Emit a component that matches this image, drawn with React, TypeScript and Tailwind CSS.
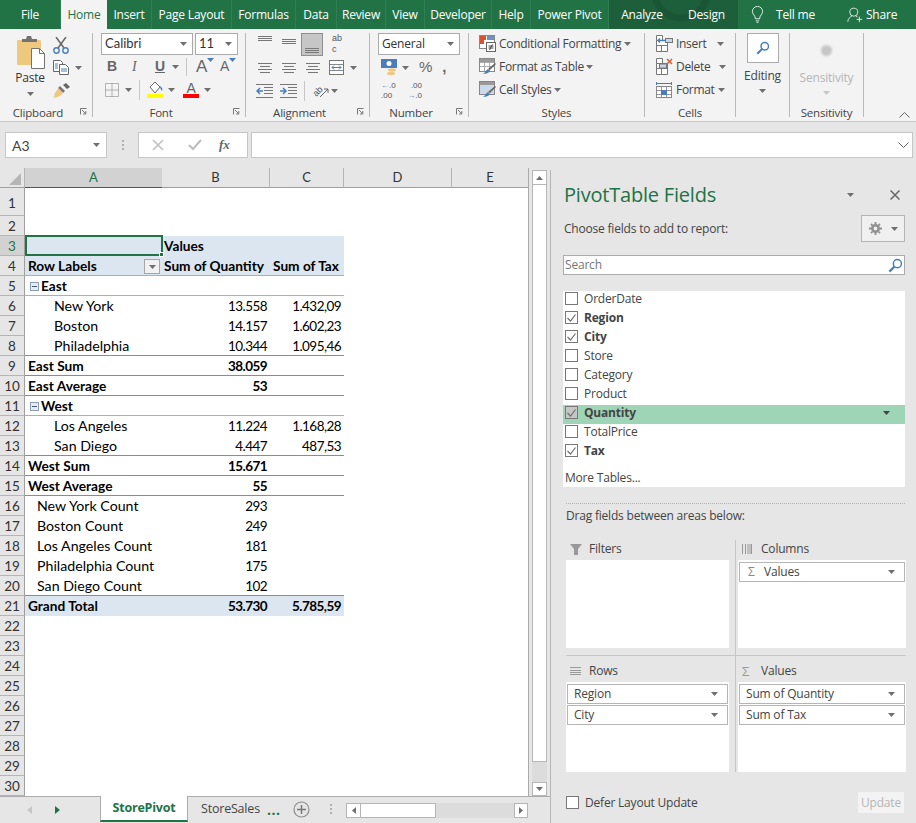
import type { ReactNode } from 'react'

const BLUE = '#4a7ebb'
const GREY = '#6f6f6f'

const ribbonTabs = [
  { label: 'File', width: 'w-[61px]' },
  { label: 'Home', width: 'w-[46px]', active: true },
  { label: 'Insert', width: 'w-[45px]' },
  { label: 'Page Layout', width: 'w-[80px]' },
  { label: 'Formulas', width: 'w-[64px]' },
  { label: 'Data', width: 'w-[41px]' },
  { label: 'Review', width: 'w-[49px]' },
  { label: 'View', width: 'w-[39px]' },
  { label: 'Developer', width: 'w-[67px]' },
  { label: 'Help', width: 'w-[39px]' },
  { label: 'Power Pivot', width: 'w-[78px]' },
]

type RowKind = 'blank' | 'head' | 'labels' | 'group' | 'city' | 'sum' | 'count' | 'total'

interface SheetRow {
  n: number
  kind: RowKind
  a?: string
  b?: string
  c?: string
  line?: 'light' | 'dark'
}

const sheetRows: SheetRow[] = [
  { n: 1, kind: 'blank' },
  { n: 2, kind: 'blank' },
  { n: 3, kind: 'head', b: 'Values' },
  { n: 4, kind: 'labels', a: 'Row Labels', b: 'Sum of Quantity', c: 'Sum of Tax', line: 'light' },
  { n: 5, kind: 'group', a: 'East', line: 'light' },
  { n: 6, kind: 'city', a: 'New York', b: '13.558', c: '1.432,09' },
  { n: 7, kind: 'city', a: 'Boston', b: '14.157', c: '1.602,23' },
  { n: 8, kind: 'city', a: 'Philadelphia', b: '10.344', c: '1.095,46', line: 'dark' },
  { n: 9, kind: 'sum', a: 'East Sum', b: '38.059', line: 'dark' },
  { n: 10, kind: 'sum', a: 'East Average', b: '53', line: 'dark' },
  { n: 11, kind: 'group', a: 'West', line: 'light' },
  { n: 12, kind: 'city', a: 'Los Angeles', b: '11.224', c: '1.168,28' },
  { n: 13, kind: 'city', a: 'San Diego', b: '4.447', c: '487,53', line: 'dark' },
  { n: 14, kind: 'sum', a: 'West Sum', b: '15.671', line: 'dark' },
  { n: 15, kind: 'sum', a: 'West Average', b: '55', line: 'dark' },
  { n: 16, kind: 'count', a: 'New York Count', b: '293' },
  { n: 17, kind: 'count', a: 'Boston Count', b: '249' },
  { n: 18, kind: 'count', a: 'Los Angeles Count', b: '181' },
  { n: 19, kind: 'count', a: 'Philadelphia Count', b: '175' },
  { n: 20, kind: 'count', a: 'San Diego Count', b: '102', line: 'dark' },
  { n: 21, kind: 'total', a: 'Grand Total', b: '53.730', c: '5.785,59' },
  ...[22, 23, 24, 25, 26, 27, 28, 29, 30].map((n): SheetRow => ({ n, kind: 'blank' })),
]

const fields = [
  { name: 'OrderDate' },
  { name: 'Region', checked: true },
  { name: 'City', checked: true },
  { name: 'Store' },
  { name: 'Category' },
  { name: 'Product' },
  { name: 'Quantity', checked: true, active: true },
  { name: 'TotalPrice' },
  { name: 'Tax', checked: true },
]

function Caret({ className = '', color = GREY }: { className?: string; color?: string }) {
  return (
    <svg width="7" height="4" viewBox="0 0 7 4" className={`shrink-0 ${className}`}>
      <path d="M0 0h7L3.5 4z" fill={color} />
    </svg>
  )
}

function Lines({ rows, className = '' }: { rows: [number, number][]; className?: string }) {
  return (
    <svg width="16" height="14" viewBox="0 0 16 14" className={`shrink-0 ${className}`}>
      {rows.map(([y, w], i) => (
        <rect key={i} x={(16 - w) / 2} y={y} width={w} height="1" fill="#777" />
      ))}
    </svg>
  )
}

function Launcher() {
  return (
    <svg width="7" height="7" viewBox="0 0 7 7" className="absolute right-[5px] top-[2px]">
      <path d="M.5 6.5v-6h6M2 2l3.500 3.500M5.800 3v3H3" fill="none" stroke="#777" />
    </svg>
  )
}

function Group({
  label,
  width,
  launcher,
  children,
}: {
  label: string
  width: string
  launcher?: boolean
  children: ReactNode
}) {
  return (
    <div className={`flex h-[84px] shrink-0 flex-col border-r border-[#b9b9b9] ${width}`}>
      <div className="h-[70px] shrink-0">{children}</div>
      <div className={`relative mt-[3px] text-center text-[11.5px] leading-[14px] text-[#444] ${launcher ? 'pr-[16px]' : ''}`}>
        {label}
        {launcher ? <Launcher /> : null}
      </div>
    </div>
  )
}

function StyleIcon({ kind }: { kind: 'cond' | 'table' | 'cell' }) {
  return (
    <svg width="17" height="17" viewBox="0 0 17 17" className="shrink-0">
      {kind === 'cond' ? (
        <>
          <rect x=".5" y=".5" width="15" height="13" fill="#fff" stroke="#888" />
          <rect x="1" y="1" width="6" height="4" fill="#d9532c" />
          <rect x="1" y="5" width="4" height="4" fill="#d9532c" />
          <rect x="8" y="1" width="7" height="4" fill="#6d93c4" />
          <rect x="7.5" y="7.5" width="9" height="9" fill="#fff" stroke="#666" />
          <path d="M9.500 11h5M9.500 13h5M13.500 9.500l-3 5.500" stroke="#444" fill="none" />
        </>
      ) : (
        <>
          <rect x=".5" y=".5" width="15" height="13" fill={kind === 'cell' ? '#ccd9e8' : '#fff'} stroke="#888" />
          {kind === 'table' ? (
            <path d="M1 4.500h14M1 8.500h14M5.500 1v12M10.500 1v12" stroke="#aaa" fill="none" />
          ) : null}
          <path d="M1 1h14v3H1z" fill="#9a9a9a" />
          <path d="M16 5l1 1-6 6-2-1z" fill="#666" />
          <path d="M9 11l2 2c-1 2-4 3-7 3 2-1 3-4 5-5z" fill={BLUE} />
        </>
      )}
    </svg>
  )
}

function CellIcon({ kind }: { kind: 'insert' | 'delete' | 'format' }) {
  return (
    <svg width="17" height="17" viewBox="0 0 17 17" className="shrink-0">
      {kind === 'format' ? (
        <>
          <path d="M.5 1v3M15.500 1v3M1 2.500h14" stroke={BLUE} fill="none" />
          <rect x=".5" y="5.500" width="15" height="11" fill="#fff" stroke="#888" />
          <path d="M5.500 6v10M10.500 6v10M1 9.500h14M1 13.500h14" stroke="#999" fill="none" />
          <rect x="5" y="9" width="6" height="5" fill={BLUE} />
        </>
      ) : (
        <>
          <path d="M.5.500h6v5h-6zM.5 5.500h11v5H.5zM.5 10.500h11v6H.5zM5.500 10.500v6" fill="#fff" stroke="#777" />
          {kind === 'insert' ? (
            <>
              <rect x="9.500" y="3.500" width="7" height="4" fill="#c7d7ea" stroke="#777" />
              <path d="M9 5.500H2M4 3.500l-2 2 2 2" stroke={BLUE} strokeWidth="1.400" fill="none" />
            </>
          ) : (
            <>
              <rect x="3.500" y="6" width="7" height="4" fill="#c7d7ea" stroke="#777" />
              <path d="M11 1l5 5M16 1l-5 5" stroke="#d9603c" strokeWidth="1.600" />
            </>
          )}
        </>
      )}
    </svg>
  )
}

function Magnifier({ size = 16, color = BLUE }: { size?: number; color?: string }) {
  return (
    <svg width={size} height={size} viewBox="0 0 16 16" className="shrink-0">
      <circle cx="10" cy="6" r="4.300" fill="none" stroke={color} strokeWidth="1.600" />
      <path d="M7 9l-5.500 5.500" stroke={color} strokeWidth="2.400" />
    </svg>
  )
}

function RibbonButton({ icon, label, caretGap }: { icon: ReactNode; label: string; caretGap: string }) {
  return (
    <div className="flex h-[23px] items-center">
      {icon}
      <span className="ml-[3px] whitespace-nowrap text-[12px] tracking-[-0.3px] text-[#444]">{label}</span>
      <Caret className={caretGap} />
    </div>
  )
}

function Ribbon() {
  return (
    <div className="flex h-[93px] shrink-0 border-b border-[#c8c8c8] bg-[#f3f3f3] pt-[4px]">
      <Group label="Clipboard" width="w-[93px]" launcher>
        <div className="flex">
          <div className="ml-[7px] flex w-[46px] flex-col items-center">
            <svg width="30" height="33" viewBox="0 0 30 33" className="mr-[-1px] mt-[3px]">
              <rect x="1" y="4" width="24" height="25" rx="1" fill="#edc87e" />
              <path d="M6 6V3h4l1-3h4l1 3h5v3z" fill="#737373" />
              <path d="M15.500 12.500h8l5 5v15h-13z" fill="#fff" stroke="#737373" />
              <path d="M23.500 12.500v5h5" fill="none" stroke="#737373" />
            </svg>
            <span className="mt-[1px] text-[12px] leading-[16px] text-[#333]">Paste</span>
            <Caret className="mt-[6px]" />
          </div>
          <div className="flex flex-col">
            <div className="flex h-[23px] items-center pt-[2px]">
              <svg width="16" height="17" viewBox="0 0 16 17">
                <path d="M3 0l8 11M13 0L5 11" stroke="#666" strokeWidth="1.500" />
                <circle cx="3.500" cy="13.500" r="2.700" fill="none" stroke={BLUE} strokeWidth="1.400" />
                <circle cx="12.500" cy="13.500" r="2.700" fill="none" stroke={BLUE} strokeWidth="1.400" />
              </svg>
            </div>
            <div className="flex h-[23px] items-center">
              <svg width="16" height="15" viewBox="0 0 16 15">
                <path d="M.5.500h7l2 2v9h-9z" fill="#fff" stroke="#666" />
                <path d="M6.500 4.500h6l3 3v7h-9z" fill="#fff" stroke="#666" />
                <path d="M8 9h6M8 11h6M2 4h3M2 6h3M2 8h3" stroke={BLUE} />
              </svg>
              <Caret className="ml-[6px]" />
            </div>
            <div className="flex h-[23px] items-center">
              <svg width="17" height="15" viewBox="0 0 17 15">
                <path d="M10 2l3-2 4 4-3 2z" fill="#666" />
                <path d="M7 3l5 5-2 2-5-5z" fill="#777" />
                <path d="M5 5l5 5c-2 3-5 4-10 5 2-2 1-3 2-5 1-1 2-3 3-5z" fill="#edc87e" />
              </svg>
            </div>
          </div>
        </div>
      </Group>

      <Group label="Font" width="w-[153px]" launcher>
        <div className="flex pl-[8px]">
          <div className="flex h-[22px] w-[92px] items-center justify-between border border-[#ababab] bg-white pl-[3px] pr-[5px] font-['Lato',sans-serif] text-[13px] tracking-normal text-[#333]">
            Calibri
            <Caret />
          </div>
          <div className="ml-[2px] flex h-[22px] w-[43px] items-center justify-between border border-[#ababab] bg-white pl-[3px] pr-[5px] font-['Lato',sans-serif] text-[13px] tracking-normal text-[#333]">
            11
            <Caret />
          </div>
        </div>
        <div className="flex h-[23px] items-center pl-[14px] font-['Liberation_Sans',sans-serif] text-[#666]">
          <span className="w-[24px] text-[14px] font-bold">B</span>
          <span className="w-[24px] pl-[1px] font-['Liberation_Serif',serif] text-[14px] italic">I</span>
          <span className="w-[13px] text-[14px] font-bold underline">U</span>
          <Caret className="ml-[4px]" />
          <span className="ml-[7px] h-[18px] w-px bg-[#c6c6c6]" />
          <span className="ml-[9px] flex w-[24px] items-start text-[17px] leading-[17px]">
            A
            <Caret color={BLUE} />
          </span>
          <span className="flex w-[20px] items-start text-[14px] leading-[17px]">
            A
            <Caret color={BLUE} />
          </span>
        </div>
        <div className="flex h-[23px] items-center pl-[12px]">
          <svg width="14" height="14" viewBox="0 0 14 14">
            <path d="M.5.500h13v13H.5zM7 .500v13M.5 7h13" fill="none" stroke="#777" strokeDasharray="1 1" />
          </svg>
          <Caret className="ml-[6px]" />
          <span className="ml-[7px] h-[20px] w-px bg-[#c6c6c6]" />
          <svg width="17" height="17" viewBox="0 0 17 17" className="ml-[7px]">
            <path d="M3 6l5-5 5 5-5 6z" fill="#fff" stroke="#666" />
            <path d="M13 5c2 1 3 3 2 5-1-1-2-3-2-5z" fill={BLUE} />
            <rect x="0" y="13" width="16" height="4" fill="#ffff00" />
          </svg>
          <Caret className="ml-[4px]" />
          <div className="ml-[8px] flex w-[16px] flex-col items-center">
            <span className="h-[13px] font-['Liberation_Sans',sans-serif] text-[14px] leading-[14px] text-[#666]">A</span>
            <span className="h-[4px] w-[16px] bg-[#ff0000]" />
          </div>
          <Caret className="ml-[5px]" />
        </div>
      </Group>

      <Group label="Alignment" width="w-[124px]" launcher>
        <div className="flex h-[23px] items-start pl-[11px]">
          <Lines rows={[[2, 14], [4, 14], [6, 14]]} className="mt-[1px]" />
          <Lines rows={[[5, 14], [7, 14], [9, 14]]} className="ml-[8px] mt-[1px]" />
          <div className="ml-[4px] flex h-[23px] w-[22px] items-end justify-center border border-[#8f8f8f] bg-[#c6c6c6]">
            <Lines rows={[[7, 14], [9, 14], [11, 14]]} />
          </div>
          <span className="ml-[9px] font-['Liberation_Sans',sans-serif] text-[9px] leading-[11px] tracking-normal text-[#555]">
            ab
            <br />c
          </span>
        </div>
        <div className="flex h-[23px] items-center pl-[11px]">
          <Lines rows={[[2, 14], [5, 10], [8, 14], [11, 10]]} />
          <Lines rows={[[2, 14], [5, 10], [8, 14], [11, 10]]} className="ml-[8px]" />
          <Lines rows={[[2, 14], [5, 10], [8, 14], [11, 10]]} className="ml-[8px]" />
          <svg width="15" height="15" viewBox="0 0 15 15" className="ml-[8px]">
            <rect x=".5" y=".5" width="14" height="14" fill="#fff" stroke="#777" />
            <path d="M1 4.500h13M1 10.500h13" stroke="#888" fill="none" />
            <path d="M3 7.500h9M5 5.500l-2 2 2 2M10 5.500l2 2-2 2" stroke={BLUE} fill="none" />
          </svg>
          <Caret className="ml-[6px]" />
        </div>
        <div className="flex h-[23px] items-center pl-[10px]">
          <svg width="17" height="14" viewBox="0 0 17 14">
            <path d="M8 3.500h9M8 6.500h9M8 9.500h9M0 13.500h17M0 .5h17" stroke="#777" />
            <path d="M1 7h6M4 4L1 7l3 3" stroke={BLUE} strokeWidth="1.500" fill="none" />
          </svg>
          <svg width="17" height="14" viewBox="0 0 17 14" className="ml-[7px]">
            <path d="M8 3.500h9M8 6.500h9M8 9.500h9M0 13.500h17M0 .5h17" stroke="#777" />
            <path d="M0 7h6M3 4l3 3-3 3" stroke={BLUE} strokeWidth="1.500" fill="none" />
          </svg>
          <span className="ml-[7px] h-[20px] w-px bg-[#c6c6c6]" />
          <svg width="17" height="17" viewBox="0 0 17 17" className="ml-[7px]">
            <text x="1" y="13" fontSize="9" fill="#555" fontFamily="Liberation Sans" transform="rotate(-45 5 10)">
              ab
            </text>
            <path d="M8 15l8-8M16 11V7h-4" stroke="#666" fill="none" />
          </svg>
          <Caret className="ml-[2px]" />
        </div>
      </Group>

      <Group label="Number" width="w-[99px]" launcher>
        <div className="ml-[8px] flex h-[22px] w-[82px] items-center justify-between border border-[#ababab] bg-white pl-[3px] pr-[5px] text-[12px] text-[#333]">
          General
          <Caret />
        </div>
        <div className="mt-[1px] flex h-[23px] items-center pl-[11px]">
          <svg width="16" height="17" viewBox="0 0 16 17">
            <rect x="0" y="0" width="16" height="9" fill={BLUE} />
            <circle cx="8" cy="4.500" r="2.500" fill="#fff" />
            <ellipse cx="11" cy="11" rx="4" ry="1.700" fill="#edc87e" />
            <ellipse cx="10" cy="14.500" rx="4" ry="1.700" fill="#edc87e" />
          </svg>
          <Caret className="ml-[5px]" />
          <span className="ml-[10px] font-['Liberation_Sans',sans-serif] text-[15px] text-[#666]">%</span>
          <span className="ml-[10px] font-['Liberation_Sans',sans-serif] text-[15px] font-bold text-[#666]">,</span>
        </div>
        <div className="flex h-[23px] items-center gap-[9px] pl-[11px] font-['Liberation_Sans',sans-serif] text-[8px] leading-[10px] tracking-normal text-[#555]">
          <span className="w-[16px]">
            <span className="text-[#4a7ebb]">←</span>.0
            <br />
            .00
          </span>
          <span className="w-[16px] text-right">
            .00
            <br />
            <span className="text-[#4a7ebb]">→</span>.0
          </span>
        </div>
      </Group>

      <Group label="Styles" width="w-[176px]">
        <div className="mt-[-1px] pl-[10px]">
          <RibbonButton icon={<StyleIcon kind="cond" />} label="Conditional Formatting" caretGap="ml-[3px]" />
          <RibbonButton icon={<StyleIcon kind="table" />} label="Format as Table" caretGap="ml-[2px]" />
          <RibbonButton icon={<StyleIcon kind="cell" />} label="Cell Styles" caretGap="ml-[2px]" />
        </div>
      </Group>

      <Group label="Cells" width="w-[91px]">
        <div className="mt-[-1px] pl-[11px]">
          <RibbonButton icon={<CellIcon kind="insert" />} label="Insert" caretGap="ml-[10px]" />
          <RibbonButton icon={<CellIcon kind="delete" />} label="Delete" caretGap="ml-[9px]" />
          <RibbonButton icon={<CellIcon kind="format" />} label="Format" caretGap="ml-[3px]" />
        </div>
      </Group>

      <Group label="" width="w-[54px]">
        <div className="flex flex-col items-center">
          <div className="flex h-[30px] w-[32px] items-center justify-center border border-[#ababab] bg-white">
            <Magnifier size={14} />
          </div>
          <span className="mt-[5px] text-[12px] leading-[16px] text-[#444]">Editing</span>
          <Caret className="mt-[5px]" />
        </div>
      </Group>

      <Group label="Sensitivity" width="w-[74px]">
        <div className="flex flex-col items-center">
          <span className="mt-[12px] h-[11px] w-[11px] rounded-full bg-[#c6c6c6] blur-[1px]" />
          <span className="mt-[14px] text-[12px] leading-[16px] text-[#b5b5b5]">Sensitivity</span>
          <Caret className="mt-[5px]" color="#c6c6c6" />
        </div>
      </Group>

      <div className="flex flex-1 items-end justify-end pb-[3px] pr-[6px]">
        <svg width="11" height="6" viewBox="0 0 11 6">
          <path d="M.5 5.500l5-5 5 5" fill="none" stroke="#666" />
        </svg>
      </div>
    </div>
  )
}

function TabBar() {
  return (
    <div className="flex h-[29px] shrink-0 bg-[#217346] text-[12px] text-white">
      {ribbonTabs.map((tab) => (
        <div
          key={tab.label}
          className={`flex items-center justify-center ${tab.width} ${
            tab.active ? 'bg-[#f3f3f3] text-[#217346]' : 'border-r border-[#2f7f52]'
          }`}
        >
          {tab.label}
        </div>
      ))}
      <div className="relative flex w-[129px] overflow-hidden bg-[#1d5f3b]">
        {/* faint ring pattern behind the contextual tabs */}
        <svg width="129" height="29" viewBox="0 0 129 29" className="absolute left-0 top-0">
          <circle cx="72" cy="-8" r="26" fill="none" stroke="#1a5635" strokeWidth="7" />
        </svg>
        <div className="relative flex w-[66px] items-center justify-center">Analyze</div>
        <div className="relative flex w-[63px] items-center justify-center">Design</div>
      </div>
      <div className="flex flex-1 items-center pl-[13px]">
        <svg width="13" height="17" viewBox="0 0 14 20" fill="none" stroke="#fff">
          <path d="M4.500 15c0-4-3.500-5-3.500-8.500a6 6 0 0112 0C13 10 9.500 11 9.500 15zM5 17.500h4M6 19.500h2" />
        </svg>
        <span className="ml-[12px]">Tell me</span>
        <svg width="16" height="16" viewBox="0 0 20 19" fill="none" stroke="#fff" className="ml-[32px]">
          <circle cx="8.500" cy="6" r="5" />
          <path d="M1 18c0-4 3-6 5-7M11 11l2 1M12 15h7M15.500 11.500v7" />
        </svg>
        <span className="ml-[3px]">Share</span>
      </div>
    </div>
  )
}

function FormulaBar() {
  return (
    <div className="flex h-[46px] shrink-0 items-start pl-[5px] pr-[3px] pt-[10px]">
      <div className="flex h-[26px] w-[102px] items-center justify-between border border-[#c6c6c6] bg-white pl-[6px] pr-[6px] font-['Lato',sans-serif] text-[14px] tracking-normal text-[#444]">
        A3
        <Caret />
      </div>
      <div className="flex h-[26px] w-[31px] flex-col items-center justify-center gap-[2px]">
        <span className="h-[2px] w-[2px] bg-[#b0b0b0]" />
        <span className="h-[2px] w-[2px] bg-[#b0b0b0]" />
        <span className="h-[2px] w-[2px] bg-[#b0b0b0]" />
      </div>
      <div className="flex h-[26px] w-[110px] items-center border border-[#c6c6c6] bg-white">
        <svg width="12" height="12" viewBox="0 0 12 12" className="ml-[13px]">
          <path d="M1 1l10 10M11 1L1 11" stroke="#bdbdbd" strokeWidth="1.500" />
        </svg>
        <svg width="14" height="12" viewBox="0 0 14 12" className="ml-[24px]">
          <path d="M1 6l4 4 8-9" stroke="#bdbdbd" strokeWidth="2" fill="none" />
        </svg>
        <span className="ml-[17px] font-['Liberation_Serif',serif] text-[13px] font-bold italic text-[#666]">fx</span>
      </div>
      <div className="ml-[3px] flex h-[26px] flex-1 items-center justify-end border border-[#c6c6c6] bg-white pr-[3px]">
        <svg width="11" height="6" viewBox="0 0 11 6">
          <path d="M.5.500l5 5 5-5" fill="none" stroke="#666" />
        </svg>
      </div>
    </div>
  )
}

function MinusBox() {
  return (
    <svg width="9" height="9" viewBox="0 0 9 9" className="mr-[2px] mt-[5px] shrink-0">
      <rect x=".5" y=".5" width="8" height="8" fill="#e6ecf4" stroke="#8d9db5" />
      <path d="M2 4.500h5" stroke="#4a5c7a" />
    </svg>
  )
}

function RowCells({ row }: { row: SheetRow }) {
  if (row.kind === 'blank') {
    return <div className="col-span-5 bg-white" />
  }

  const fill = row.kind === 'head' || row.kind === 'labels' || row.kind === 'total' ? 'bg-[#dce6f1]' : 'bg-white'
  const isBold = row.kind !== 'city' && row.kind !== 'count'
  const line =
    row.line === 'light' ? 'border-b border-[#95b3d7]' : row.line === 'dark' ? 'border-b border-[#6f92bc]' : ''
  const headerCells = row.kind === 'head' || row.kind === 'labels'
  const numbers = headerCells ? '' : 'justify-end text-[13.5px] tracking-[-0.55px]'

  return (
    <>
      <div
        className={`col-span-3 grid grid-cols-[137px_108px_74px] pt-[1px] leading-[18px] text-black ${fill} ${line} ${
          isBold ? 'text-[13.7px] font-bold' : 'text-[14.2px]'
        }`}
      >
        <div
          className={`relative flex items-start whitespace-nowrap ${
            row.kind === 'city' ? 'pl-[29px]' : row.kind === 'count' ? 'pl-[12px]' : row.kind === 'group' ? 'pl-[5px]' : 'pl-[3px]'
          }`}
        >
          {row.kind === 'group' ? <MinusBox /> : null}
          {row.a}
          {row.kind === 'labels' ? (
            <span className="absolute right-[2px] top-[2px] flex h-[15px] w-[16px] items-center justify-center border border-[#a6a6a6] bg-[#f1f1f1]">
              <Caret />
            </span>
          ) : null}
          {row.n === 3 ? (
            <span className="absolute left-0 top-[-2px] h-[21px] w-[138px] border-2 border-[#217346]">
              <span className="absolute bottom-[-3px] right-[-3px] h-[5px] w-[5px] border border-white bg-[#217346]" />
            </span>
          ) : null}
        </div>
        <div className={`flex items-start whitespace-nowrap pr-[3px] ${headerCells ? 'pl-[2px]' : ''} ${numbers}`}>{row.b}</div>
        <div className={`flex items-start whitespace-nowrap pr-[3px] ${headerCells ? 'pl-[3px]' : ''} ${numbers}`}>{row.c}</div>
      </div>
      <div className="col-span-2 bg-white" />
    </>
  )
}

function Sheet() {
  return (
    <div className="flex h-[628px] shrink-0">
      <div className="w-[529px] shrink-0 border-r border-[#ababab]">
        <div className="grid h-[20px] grid-cols-[25px_137px_108px_74px_108px_76px] border-b border-[#9f9f9f] text-center text-[13px] leading-[19px] text-[#333]">
          <div className="flex items-end justify-end border-r border-[#b5b5b5] pb-[3px] pr-[3px]">
            <svg width="12" height="12" viewBox="0 0 12 12">
              <path d="M12 0v12H0z" fill="#b5b5b5" />
            </svg>
          </div>
          <div className="mb-[-1px] border-b-2 border-[#217346] bg-[#d2d2d2] text-[#217346]">A</div>
          <div className="border-r border-[#b5b5b5]">B</div>
          <div className="border-r border-[#b5b5b5]">C</div>
          <div className="border-r border-[#b5b5b5]">D</div>
          <div>E</div>
        </div>
        {sheetRows.map((row) => (
          <div
            key={row.n}
            className={`grid grid-cols-[25px_137px_108px_74px_108px_76px] ${row.n === 1 ? 'h-[28px]' : 'h-[20px]'}`}
          >
            <div
              className={`border-b border-r border-b-[#b5b5b5] border-r-[#9f9f9f] text-center text-[13.5px] leading-[18px] ${
                row.n === 1 ? 'pt-[6px]' : 'pt-[1px]'
              } ${row.n === 3 ? 'bg-[#d2d2d2] text-[#217346]' : 'text-[#333]'}`}
            >
              {row.n}
            </div>
            <RowCells row={row} />
          </div>
        ))}
      </div>
      <div className="ml-[3px] mt-[2px] flex w-[15px] flex-col bg-[#dcdcdc]">
        <div className="flex h-[15px] shrink-0 items-center justify-center border border-[#b5b5b5] bg-white">
          <svg width="7" height="4" viewBox="0 0 7 4">
            <path d="M0 4h7L3.500 0z" fill={GREY} />
          </svg>
        </div>
        <div className="h-[577px] shrink-0 border-x border-b border-[#b5b5b5] bg-white" />
        <div className="flex-1" />
        <div className="flex h-[14px] shrink-0 items-center justify-center border border-[#b5b5b5] bg-white">
          <Caret />
        </div>
      </div>
    </div>
  )
}

function SheetTabs() {
  return (
    <div className="flex h-[27px] items-start border-t border-[#ababab] pr-[22px] font-['Open_Sans',sans-serif] text-[12.5px] tracking-[-0.2px]">
      <svg width="5" height="8" viewBox="0 0 5 8" className="ml-[27px] mt-[9px]">
        <path d="M5 0v8L0 4z" fill="#c6c6c6" />
      </svg>
      <svg width="5" height="8" viewBox="0 0 5 8" className="ml-[23px] mt-[9px]">
        <path d="M0 0v8l5-4z" fill="#217346" />
      </svg>
      <div className="ml-[40px] mt-[-1px] flex h-[26px] w-[88px] items-center justify-center border-x border-[#ababab] border-b-2 border-b-[#217346] bg-white font-bold text-[#217346]">
        StorePivot
      </div>
      <span className="ml-[13px] mt-[3px] text-[#444]">StoreSales</span>
      <span className="ml-[7px] mt-[2px] text-[14px] font-bold tracking-[0.5px] text-[#217346]">...</span>
      <svg width="17" height="17" viewBox="0 0 17 17" className="ml-[13px] mt-[4px]">
        <circle cx="8.500" cy="8.500" r="7.500" fill="none" stroke="#8f8f8f" strokeWidth="1.200" />
        <path d="M4 8.500h9M8.500 4v9" stroke="#777" strokeWidth="1.500" />
      </svg>
      <div className="ml-[20px] mt-[7px] flex flex-col gap-[2px]">
        <span className="h-[2px] w-[2px] bg-[#b0b0b0]" />
        <span className="h-[2px] w-[2px] bg-[#b0b0b0]" />
        <span className="h-[2px] w-[2px] bg-[#b0b0b0]" />
      </div>
      <div className="ml-[14px] mt-[6px] flex h-[15px] flex-1 bg-[#dcdcdc]">
        <div className="flex w-[15px] items-center justify-center border border-[#b5b5b5] bg-white">
          <svg width="4" height="7" viewBox="0 0 4 7">
            <path d="M4 0v7L0 3.500z" fill={GREY} />
          </svg>
        </div>
        <div className="w-[75px] border-y border-r border-[#b5b5b5] bg-white" />
        <div className="flex-1" />
        <div className="flex w-[14px] items-center justify-center border border-[#b5b5b5] bg-white">
          <svg width="4" height="7" viewBox="0 0 4 7">
            <path d="M0 0v7l4-3.500z" fill={GREY} />
          </svg>
        </div>
      </div>
    </div>
  )
}

function Checkbox({ checked, muted }: { checked?: boolean; muted?: boolean }) {
  return (
    <span className={`flex h-[13px] w-[13px] shrink-0 items-center justify-center border border-[#777] ${muted ? 'bg-[#c6c6c6]' : 'bg-white'}`}>
      {checked ? (
        <svg width="9" height="8" viewBox="0 0 9 8">
          <path d="M.5 4l3 3 5-6.500" fill="none" stroke="#6f6f6f" strokeWidth="1.200" />
        </svg>
      ) : null}
    </span>
  )
}

function Pill({ label, sigma }: { label: string; sigma?: boolean }) {
  return (
    <div className={`mx-[1px] flex h-[20px] items-center border border-[#b5b5b5] bg-white pr-[9px] text-[12px] text-[#444] ${sigma ? 'pl-[8px]' : 'pl-[6px]'}`}>
      {sigma ? <span className="mr-[7px] w-[9px] text-[#888]">Σ</span> : null}
      <span className="flex-1">{label}</span>
      <Caret />
    </div>
  )
}

function AreaLabel({ icon, label }: { icon: ReactNode; label: string }) {
  return (
    <div className="flex items-center pl-[4px] text-[12px] text-[#444]">
      <span className="flex w-[19px] items-center text-[#999]">{icon}</span>
      {label}
    </div>
  )
}

function PivotPanel() {
  return (
    <div className="mt-[2px] flex h-[653px] w-[366px] flex-col border-l border-[#b5b5b5] pl-[12px] pr-[11px]">
      <div className="mt-[10px] flex h-[30px] items-center pl-[1px] text-[20px] text-[#217346]">
        <span className="flex-1">PivotTable Fields</span>
        <Caret className="mr-[36px]" />
        <svg width="10" height="10" viewBox="0 0 10 10" className="mr-[5px]">
          <path d="M.5.500l9 9M9.500.500l-9 9" stroke="#666" strokeWidth="1.500" />
        </svg>
      </div>
      <div className="mt-[5px] flex h-[27px] items-center text-[12px] text-[#444]">
        <span className="flex-1 pl-[1px]">Choose fields to add to report:</span>
        <div className="flex h-[27px] w-[44px] items-center justify-center gap-[9px] border border-[#b5b5b5] bg-[#f0f0f0]">
          <svg width="13" height="13" viewBox="0 0 13 13">
            <circle cx="6.500" cy="6.500" r="3.200" fill="none" stroke="#8f8f8f" strokeWidth="2.600" />
            <path d="M6.500 0v13M0 6.500h13M2 2l9 9M11 2l-9 9" stroke="#8f8f8f" strokeWidth="1.800" strokeDasharray="2 9" />
          </svg>
          <Caret />
        </div>
      </div>
      <div className="mt-[13px] flex h-[20px] items-center border border-[#ababab] bg-white pl-[1px] pr-[1px] text-[12px] text-[#777]">
        <span className="flex-1">Search</span>
        <Magnifier size={15} />
      </div>
      <div className="mt-[16px] h-[196px] bg-white text-[12px] text-[#444]">
        {fields.map((field) => (
          <div
            key={field.name}
            className={`flex h-[19px] items-start pl-[2px] pr-[15px] pt-[1px] ${field.active ? 'bg-[#9fd5b7]' : ''}`}
          >
            <Checkbox checked={field.checked} muted={field.active} />
            <span className={`ml-[6px] flex-1 leading-[14px] ${field.checked ? 'font-bold' : ''}`}>{field.name}</span>
            {field.active ? <Caret className="mt-[5px]" color="#444" /> : null}
          </div>
        ))}
        <div className="mt-[7px] pl-[2px] leading-[17px]">More Tables...</div>
      </div>
      <div className="ml-[3px] mt-[16px] border-t border-dotted border-[#b0b0b0]" />
      <div className="ml-[3px] mt-[4px] h-[16px] text-[12px] leading-[16px] text-[#444]">Drag fields between areas below:</div>
      <div className="ml-[3px] mt-[16px] grid w-[340px] grid-cols-[170px_170px]">
        <div className="h-[116px] border-b border-r border-[#c6c6c6] pr-[6px]">
          <div className="h-[20px]">
            <AreaLabel
              label="Filters"
              icon={
                <svg width="12" height="11" viewBox="0 0 12 11">
                  <path d="M0 0h12L8 5v6H4V5z" fill="#999" />
                </svg>
              }
            />
          </div>
          <div className="h-[88px] bg-white" />
        </div>
        <div className="h-[116px] border-b border-[#c6c6c6] pl-[2px]">
          <div className="h-[20px]">
            <AreaLabel
              label="Columns"
              icon={
                <svg width="10" height="10" viewBox="0 0 10 10">
                  <path d="M.5 0v10M3.500 0v10M6 0v10M8 0v10M9.500 0v10" stroke="#999" />
                </svg>
              }
            />
          </div>
          <div className="h-[88px] bg-white pt-[2px]">
            <Pill label="Values" sigma />
          </div>
        </div>
        <div className="h-[116px] border-r border-[#c6c6c6] pr-[6px]">
          <div className="flex h-[26px] items-center pt-[4px]">
            <AreaLabel
              label="Rows"
              icon={
                <svg width="11" height="9" viewBox="0 0 11 9">
                  <path d="M0 .5h11M0 3.500h11M0 5.500h11M0 7.500h11" stroke="#999" />
                </svg>
              }
            />
          </div>
          <div className="flex h-[90px] flex-col gap-[1px] bg-white pt-[2px]">
            <Pill label="Region" />
            <Pill label="City" />
          </div>
        </div>
        <div className="h-[116px] pl-[2px]">
          <div className="flex h-[26px] items-center pt-[4px]">
            <AreaLabel label="Values" icon={<span className="text-[13px] leading-none">Σ</span>} />
          </div>
          <div className="flex h-[90px] flex-col gap-[1px] bg-white pt-[2px]">
            <Pill label="Sum of Quantity" />
            <Pill label="Sum of Tax" />
          </div>
        </div>
      </div>
      <div className="ml-[3px] mt-[20px] flex h-[21px] items-center text-[12px] text-[#444]">
        <Checkbox />
        <span className="ml-[6px] flex-1">Defer Layout Update</span>
        <div className="mr-[1px] flex h-[21px] w-[46px] items-center justify-center bg-[#f3f3f3] text-[#b5b5b5]">Update</div>
      </div>
    </div>
  )
}

export default function App() {
  return (
    <div className="flex h-[823px] w-[916px] flex-col overflow-hidden bg-[#e6e6e6] font-['Open_Sans',sans-serif] tracking-[-0.2px]">
      <TabBar />
      <Ribbon />
      <FormulaBar />
      <div className="flex flex-1">
        <div className="flex w-[550px] shrink-0 flex-col font-['Lato',sans-serif] tracking-normal">
          <Sheet />
          <SheetTabs />
        </div>
        <PivotPanel />
      </div>
    </div>
  )
}
